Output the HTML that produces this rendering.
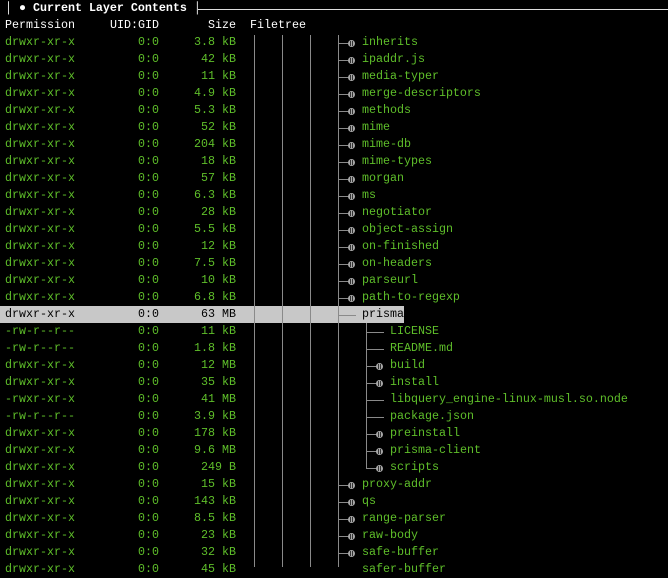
<!DOCTYPE html>
<html><head><meta charset="utf-8"><style>
body{margin:0;background:#000;width:668px;height:567px;overflow:hidden;position:relative;font-family:"Liberation Mono",monospace;font-size:11.67px;color:#5fbf2a}
.r{position:absolute;left:0;height:17px;line-height:17px;white-space:pre;width:668px}
.r span{position:absolute;top:0}
.p{left:5px}
.u{left:138px;width:21px;text-align:right}
.s{left:166px;width:70px;text-align:right}
.n{left:362px}
.m{left:390px}
.v{position:absolute;width:1px;background:#8a8a8a;z-index:2}
.h{position:absolute;height:1px;background:#8a8a8a;z-index:2}
.c{position:absolute;width:7px;height:7px;border-radius:50%;background:#a8a8a8;z-index:3}
.c:before{content:"";position:absolute;left:2px;top:1px;width:1px;height:5px;background:#333}
.c:after{content:"";position:absolute;left:4px;top:1px;width:1px;height:5px;background:#333}
.w{color:#fff}
</style></head><body>
<div class="r" style="top:0;color:#fff;font-weight:bold"><span style="left:5px">│ ● Current Layer Contents │</span></div>
<div class="h" style="left:198px;top:9px;width:470px;background:#ddd"></div>
<div class="r w" style="top:17px"><span class="p">Permission</span><span style="left:110px">UID:GID</span><span class="s">Size</span><span style="left:250px">Filetree</span></div>
<div class="v" style="left:254px;top:35px;height:532px"></div>
<div class="v" style="left:282px;top:35px;height:532px"></div>
<div class="v" style="left:310px;top:35px;height:532px"></div>
<div class="v" style="left:338px;top:35px;height:532px"></div>
<div class="v" style="left:366px;top:323px;height:145px"></div>

<div style="position:absolute;left:0;top:306px;width:404px;height:17px;background:#c8c8c8"></div>

<div class="r" style="top:34px"><span class="p">drwxr-xr-x</span><span class="u">0:0</span><span class="s">3.8 kB</span><span class="n">inherits</span></div>
<div class="r" style="top:51px"><span class="p">drwxr-xr-x</span><span class="u">0:0</span><span class="s">42 kB</span><span class="n">ipaddr.js</span></div>
<div class="r" style="top:68px"><span class="p">drwxr-xr-x</span><span class="u">0:0</span><span class="s">11 kB</span><span class="n">media-typer</span></div>
<div class="r" style="top:85px"><span class="p">drwxr-xr-x</span><span class="u">0:0</span><span class="s">4.9 kB</span><span class="n">merge-descriptors</span></div>
<div class="r" style="top:102px"><span class="p">drwxr-xr-x</span><span class="u">0:0</span><span class="s">5.3 kB</span><span class="n">methods</span></div>
<div class="r" style="top:119px"><span class="p">drwxr-xr-x</span><span class="u">0:0</span><span class="s">52 kB</span><span class="n">mime</span></div>
<div class="r" style="top:136px"><span class="p">drwxr-xr-x</span><span class="u">0:0</span><span class="s">204 kB</span><span class="n">mime-db</span></div>
<div class="r" style="top:153px"><span class="p">drwxr-xr-x</span><span class="u">0:0</span><span class="s">18 kB</span><span class="n">mime-types</span></div>
<div class="r" style="top:170px"><span class="p">drwxr-xr-x</span><span class="u">0:0</span><span class="s">57 kB</span><span class="n">morgan</span></div>
<div class="r" style="top:187px"><span class="p">drwxr-xr-x</span><span class="u">0:0</span><span class="s">6.3 kB</span><span class="n">ms</span></div>
<div class="r" style="top:204px"><span class="p">drwxr-xr-x</span><span class="u">0:0</span><span class="s">28 kB</span><span class="n">negotiator</span></div>
<div class="r" style="top:221px"><span class="p">drwxr-xr-x</span><span class="u">0:0</span><span class="s">5.5 kB</span><span class="n">object-assign</span></div>
<div class="r" style="top:238px"><span class="p">drwxr-xr-x</span><span class="u">0:0</span><span class="s">12 kB</span><span class="n">on-finished</span></div>
<div class="r" style="top:255px"><span class="p">drwxr-xr-x</span><span class="u">0:0</span><span class="s">7.5 kB</span><span class="n">on-headers</span></div>
<div class="r" style="top:272px"><span class="p">drwxr-xr-x</span><span class="u">0:0</span><span class="s">10 kB</span><span class="n">parseurl</span></div>
<div class="r" style="top:289px"><span class="p">drwxr-xr-x</span><span class="u">0:0</span><span class="s">6.8 kB</span><span class="n">path-to-regexp</span></div>
<div class="r" style="top:306px;color:#000"><span class="p">drwxr-xr-x</span><span class="u">0:0</span><span class="s">63 MB</span><span class="n">prisma</span></div>
<div class="r" style="top:323px"><span class="p">-rw-r--r--</span><span class="u">0:0</span><span class="s">11 kB</span><span class="m">LICENSE</span></div>
<div class="r" style="top:340px"><span class="p">-rw-r--r--</span><span class="u">0:0</span><span class="s">1.8 kB</span><span class="m">README.md</span></div>
<div class="r" style="top:357px"><span class="p">drwxr-xr-x</span><span class="u">0:0</span><span class="s">12 MB</span><span class="m">build</span></div>
<div class="r" style="top:374px"><span class="p">drwxr-xr-x</span><span class="u">0:0</span><span class="s">35 kB</span><span class="m">install</span></div>
<div class="r" style="top:391px"><span class="p">-rwxr-xr-x</span><span class="u">0:0</span><span class="s">41 MB</span><span class="m">libquery_engine-linux-musl.so.node</span></div>
<div class="r" style="top:408px"><span class="p">-rw-r--r--</span><span class="u">0:0</span><span class="s">3.9 kB</span><span class="m">package.json</span></div>
<div class="r" style="top:425px"><span class="p">drwxr-xr-x</span><span class="u">0:0</span><span class="s">178 kB</span><span class="m">preinstall</span></div>
<div class="r" style="top:442px"><span class="p">drwxr-xr-x</span><span class="u">0:0</span><span class="s">9.6 MB</span><span class="m">prisma-client</span></div>
<div class="r" style="top:459px"><span class="p">drwxr-xr-x</span><span class="u">0:0</span><span class="s">249 B</span><span class="m">scripts</span></div>
<div class="r" style="top:476px"><span class="p">drwxr-xr-x</span><span class="u">0:0</span><span class="s">15 kB</span><span class="n">proxy-addr</span></div>
<div class="r" style="top:493px"><span class="p">drwxr-xr-x</span><span class="u">0:0</span><span class="s">143 kB</span><span class="n">qs</span></div>
<div class="r" style="top:510px"><span class="p">drwxr-xr-x</span><span class="u">0:0</span><span class="s">8.5 kB</span><span class="n">range-parser</span></div>
<div class="r" style="top:527px"><span class="p">drwxr-xr-x</span><span class="u">0:0</span><span class="s">23 kB</span><span class="n">raw-body</span></div>
<div class="r" style="top:544px"><span class="p">drwxr-xr-x</span><span class="u">0:0</span><span class="s">32 kB</span><span class="n">safe-buffer</span></div>
<div class="r" style="top:561px"><span class="p">drwxr-xr-x</span><span class="u">0:0</span><span class="s">45 kB</span><span class="n">safer-buffer</span></div>

<!-- top-level connectors -->
<div class="h" style="left:338px;top:43px;width:11px"></div><div class="c" style="left:348px;top:40px"></div>
<div class="h" style="left:338px;top:60px;width:11px"></div><div class="c" style="left:348px;top:57px"></div>
<div class="h" style="left:338px;top:77px;width:11px"></div><div class="c" style="left:348px;top:74px"></div>
<div class="h" style="left:338px;top:94px;width:11px"></div><div class="c" style="left:348px;top:91px"></div>
<div class="h" style="left:338px;top:111px;width:11px"></div><div class="c" style="left:348px;top:108px"></div>
<div class="h" style="left:338px;top:128px;width:11px"></div><div class="c" style="left:348px;top:125px"></div>
<div class="h" style="left:338px;top:145px;width:11px"></div><div class="c" style="left:348px;top:142px"></div>
<div class="h" style="left:338px;top:162px;width:11px"></div><div class="c" style="left:348px;top:159px"></div>
<div class="h" style="left:338px;top:179px;width:11px"></div><div class="c" style="left:348px;top:176px"></div>
<div class="h" style="left:338px;top:196px;width:11px"></div><div class="c" style="left:348px;top:193px"></div>
<div class="h" style="left:338px;top:213px;width:11px"></div><div class="c" style="left:348px;top:210px"></div>
<div class="h" style="left:338px;top:230px;width:11px"></div><div class="c" style="left:348px;top:227px"></div>
<div class="h" style="left:338px;top:247px;width:11px"></div><div class="c" style="left:348px;top:244px"></div>
<div class="h" style="left:338px;top:264px;width:11px"></div><div class="c" style="left:348px;top:261px"></div>
<div class="h" style="left:338px;top:281px;width:11px"></div><div class="c" style="left:348px;top:278px"></div>
<div class="h" style="left:338px;top:298px;width:11px"></div><div class="c" style="left:348px;top:295px"></div>
<div class="h" style="left:338px;top:315px;width:18px"></div>
<div class="h" style="left:338px;top:485px;width:11px"></div><div class="c" style="left:348px;top:482px"></div>
<div class="h" style="left:338px;top:502px;width:11px"></div><div class="c" style="left:348px;top:499px"></div>
<div class="h" style="left:338px;top:519px;width:11px"></div><div class="c" style="left:348px;top:516px"></div>
<div class="h" style="left:338px;top:536px;width:11px"></div><div class="c" style="left:348px;top:533px"></div>
<div class="h" style="left:338px;top:553px;width:11px"></div><div class="c" style="left:348px;top:550px"></div>
<!-- nested connectors -->
<div class="h" style="left:366px;top:332px;width:18px"></div>
<div class="h" style="left:366px;top:349px;width:18px"></div>
<div class="h" style="left:366px;top:366px;width:11px"></div><div class="c" style="left:376px;top:363px"></div>
<div class="h" style="left:366px;top:383px;width:11px"></div><div class="c" style="left:376px;top:380px"></div>
<div class="h" style="left:366px;top:400px;width:18px"></div>
<div class="h" style="left:366px;top:417px;width:18px"></div>
<div class="h" style="left:366px;top:434px;width:11px"></div><div class="c" style="left:376px;top:431px"></div>
<div class="h" style="left:366px;top:451px;width:11px"></div><div class="c" style="left:376px;top:448px"></div>
<div class="h" style="left:366px;top:468px;width:11px"></div><div class="c" style="left:376px;top:465px"></div>
</body></html>
